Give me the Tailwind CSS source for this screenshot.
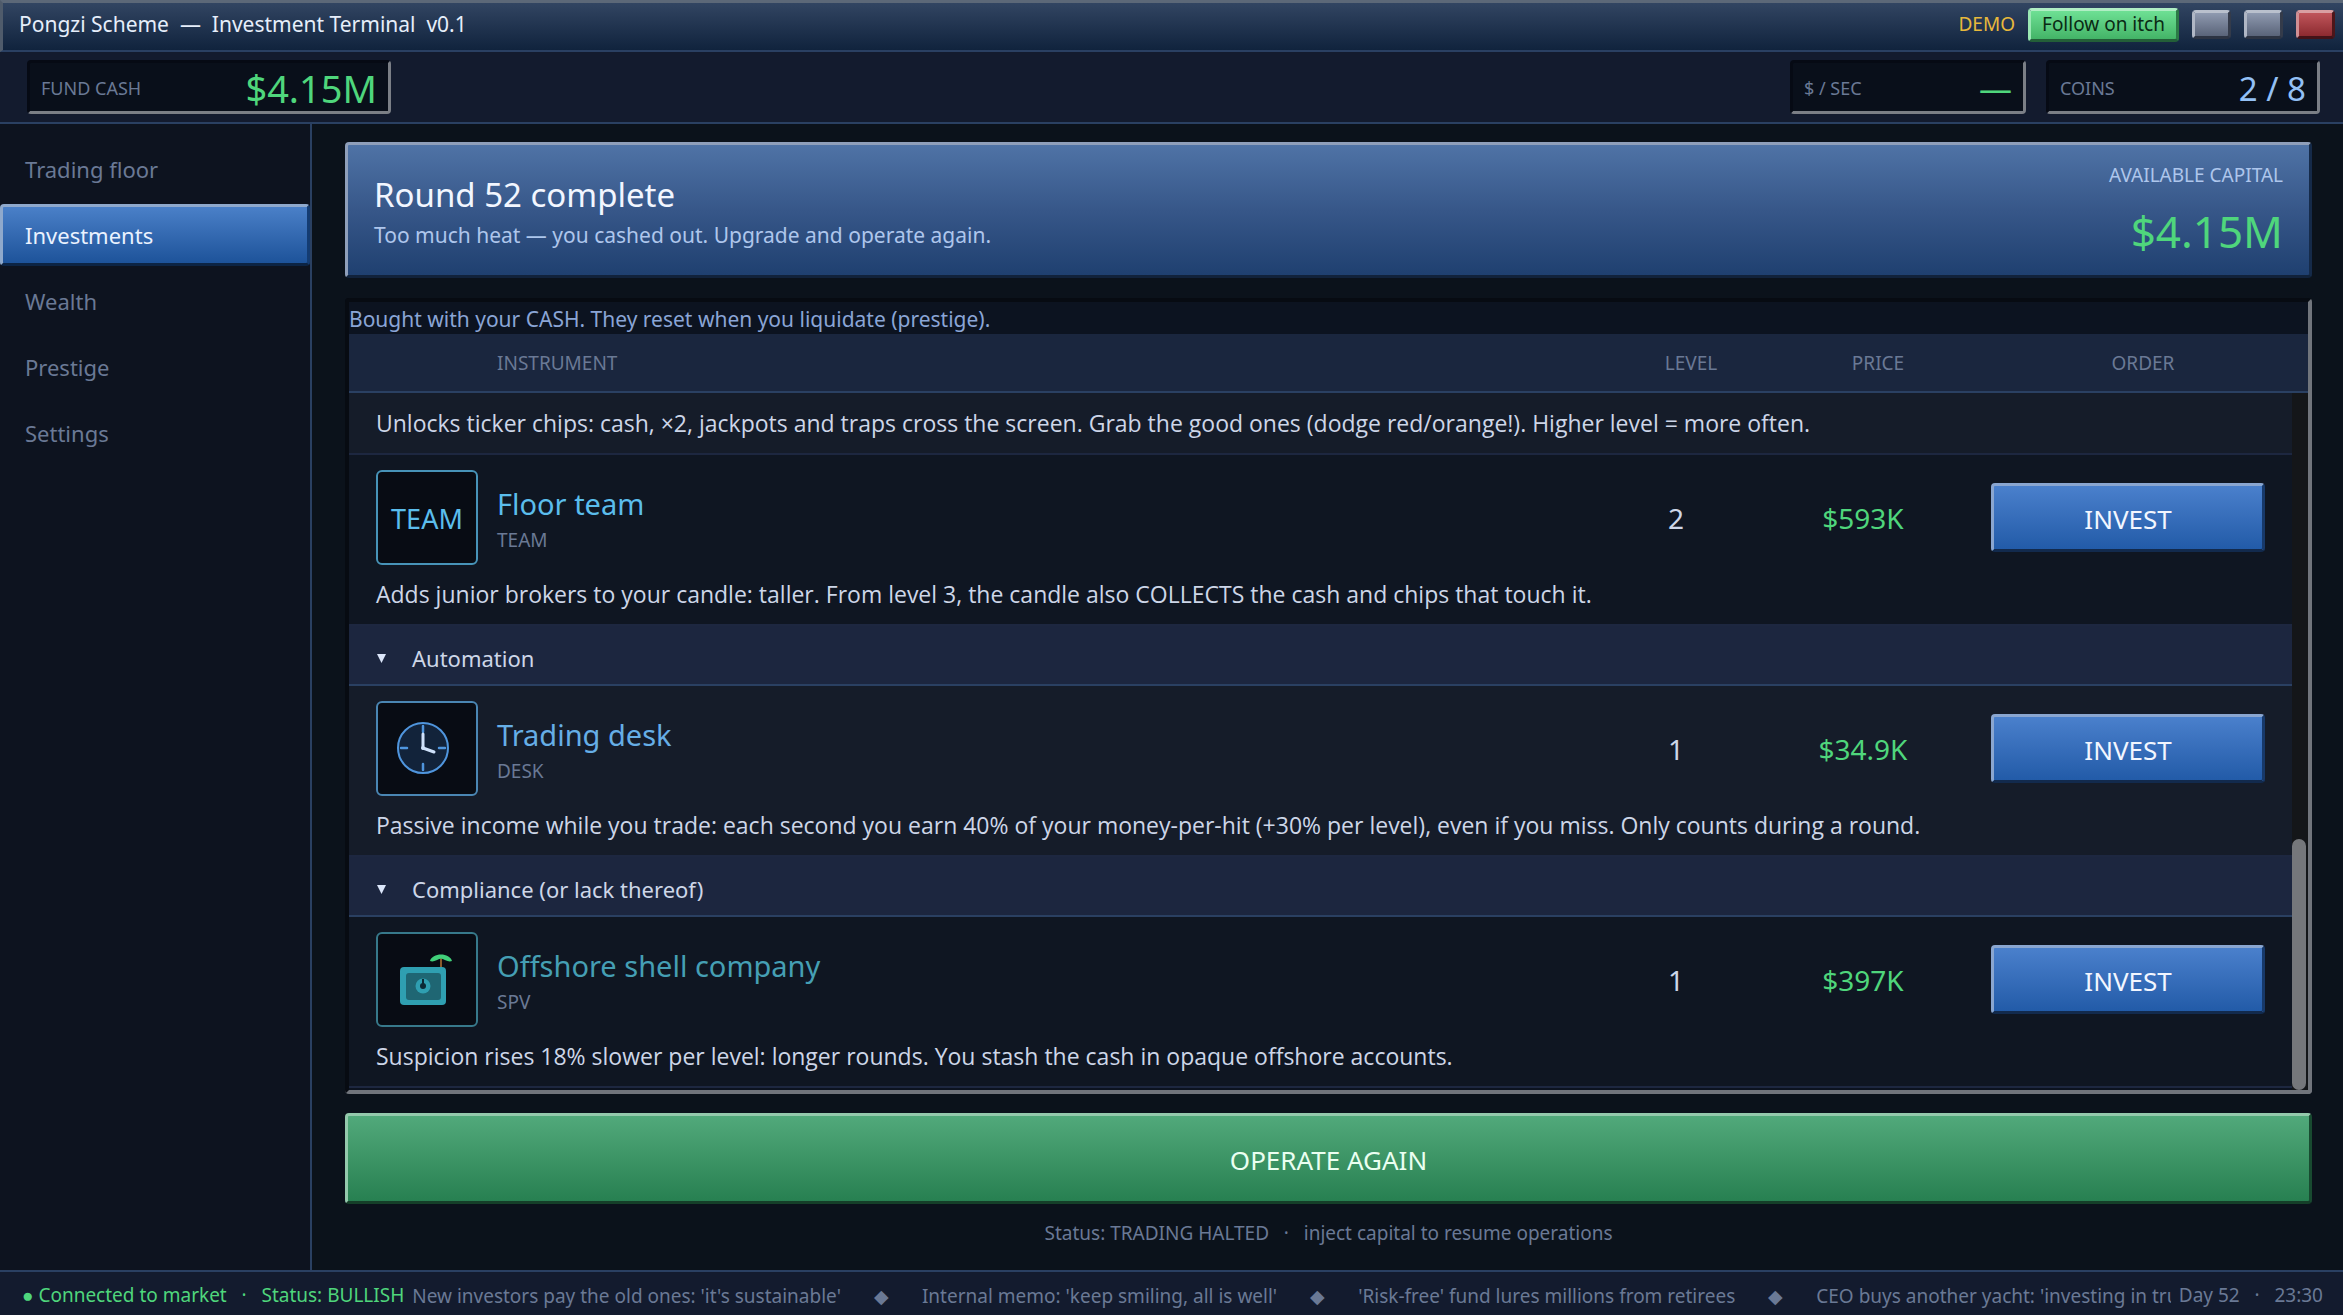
<!DOCTYPE html>
<html lang="en">

<head>
    <meta charset="UTF-8">
    <meta name="viewport" content="width=device-width, initial-scale=1.0">
    <title>Pongzi Scheme</title>
    <script src="https://cdn.jsdelivr.net/npm/@tailwindcss/browser@4"></script>
</head>

<body class="h-screen flex flex-col overflow-hidden bg-[#0b121b] font-['Segoe_UI','Noto_Sans',sans-serif] text-[21px] text-[#cdd6e8]">

    <!-- title bar -->
    <header class="h-[52px] shrink-0 flex items-center justify-between pl-4 pr-2 pb-1 bg-linear-to-b from-[#324562] to-[#10233d] border-t-3 border-l-3 border-t-[#5c6878] border-l-[#4f5b6b] border-b-2 border-b-[#2a4062]">
        <h1 class="whitespace-pre text-[#e6eefa]">Pongzi Scheme  —  Investment Terminal  v0.1</h1>
        <div class="flex items-center gap-[13px]">
            <span class="text-[#e8b93c] text-[19px]">DEMO</span>
            <a href="#" class="h-[34px] w-[151px] flex items-center justify-center rounded-sm text-[#0a2a14] text-[19px] bg-linear-to-b from-[#6ee094] to-[#43b467] border-3 border-t-[#b0eec4] border-l-[#9be8b4] border-r-[#2c7a46] border-b-[#235f38]">Follow on itch</a>
            <button aria-label="Minimize" class="w-[39px] h-[29px] rounded-sm bg-linear-to-b from-[#8f9ab0] to-[#5a6479] border-3 border-t-[#b9c0cd] border-l-[#b0b7c5] border-r-[#343b4a] border-b-[#2c3342]"></button>
            <button aria-label="Maximize" class="w-[39px] h-[29px] rounded-sm bg-linear-to-b from-[#8f9ab0] to-[#5a6479] border-3 border-t-[#b9c0cd] border-l-[#b0b7c5] border-r-[#343b4a] border-b-[#2c3342]"></button>
            <button aria-label="Close" class="w-[39px] h-[29px] rounded-sm bg-linear-to-b from-[#c0555b] to-[#8c2a30] border-3 border-t-[#d99fa2] border-l-[#d08f93] border-r-[#4d161a] border-b-[#431217]"></button>
        </div>
    </header>

    <!-- stats -->
    <section class="h-[72px] shrink-0 flex justify-between pl-[27px] py-2 pr-[23px] bg-[#131b2e] border-b-2 border-[#2a4062]">
        <div class="w-[364px] h-[54px] flex items-center justify-between px-[11px] pt-0.5 rounded-sm bg-[#090f1a] border-3 border-t-[#060a14] border-l-[#060a14] border-r-[#7b7f86] border-b-[#7b7f86]">
            <span class="text-[18px] text-[#6a7995]">FUND CASH</span>
            <span class="text-[38px] leading-none text-[#4fd67c]">$4.15M</span>
        </div>
        <div class="flex gap-5">
            <div class="w-[236px] h-[54px] flex items-center justify-between px-[11px] pt-0.5 rounded-sm bg-[#090f1a] border-3 border-t-[#060a14] border-l-[#060a14] border-r-[#7b7f86] border-b-[#7b7f86]">
                <span class="text-[18px] text-[#6a7995]">$ / SEC</span>
                <span class="text-[33px] leading-none text-[#4fd67c]">—</span>
            </div>
            <div class="w-[274px] h-[54px] flex items-center justify-between px-[11px] pt-0.5 rounded-sm bg-[#090f1a] border-3 border-t-[#060a14] border-l-[#060a14] border-r-[#7b7f86] border-b-[#7b7f86]">
                <span class="text-[18px] text-[#6a7995]">COINS</span>
                <span class="text-[33px] leading-none text-[#93c0f5]">2 / 8</span>
            </div>
        </div>
    </section>

    <div class="flex-1 min-h-0 flex">
        <!-- sidebar -->
        <nav class="w-[312px] shrink-0 flex flex-col gap-1 pt-3.5 bg-[#0d131f] border-r-2 border-[#2a4062] text-[22px] text-[#6a7995]">
            <a href="#" class="h-[62px] flex items-center pl-[22px] border-3 border-transparent">Trading floor</a>
            <a href="#" class="h-[62px] flex items-center pl-[22px] rounded-sm text-[#eaf2ff] bg-linear-to-b from-[#4a80c8] to-[#1d539a] border-3 border-t-[#8fa9cc] border-l-[#8fa9cc] border-r-[#143c72] border-b-[#0c2444]">Investments</a>
            <a href="#" class="h-[62px] flex items-center pl-[22px] border-3 border-transparent">Wealth</a>
            <a href="#" class="h-[62px] flex items-center pl-[22px] border-3 border-transparent">Prestige</a>
            <a href="#" class="h-[62px] flex items-center pl-[22px] border-3 border-transparent">Settings</a>
        </nav>

        <main class="flex-1 min-w-0 flex flex-col pl-[33px] pr-[31px] pt-[18px]">
            <!-- round banner -->
            <section class="h-[136px] shrink-0 flex justify-between px-[26px] pt-2.5 rounded-sm bg-linear-to-b from-[#4f73a6] via-[#375789] to-[#1f4070] border-3 border-t-[#8f9fba] border-l-[#8f9fba] border-r-[#152a49] border-b-[#11223b]">
                <div class="flex flex-col justify-center">
                    <h2 class="text-[33px] leading-10 text-[#f2f6ff]">Round 52 complete</h2>
                    <p class="leading-10 text-[#aec6ec]">Too much heat — you cashed out. Upgrade and operate again.</p>
                </div>
                <div class="flex flex-col justify-center items-end">
                    <p class="text-[19px] leading-8 text-[#aec6ec]">AVAILABLE CAPITAL</p>
                    <p class="text-[44px] leading-[80px] text-[#4fd67c]">$4.15M</p>
                </div>
            </section>

            <!-- instruments -->
            <section class="flex-1 min-h-0 mt-5 mb-[19px] flex flex-col rounded-sm bg-[#0c1320] border-4 border-t-[#070b12] border-l-[#070b12] border-r-[#71757c] border-b-[#71757c]">
                <p class="h-8 pt-1 shrink-0 flex items-center text-[#8aa5d6]">Bought with your CASH. They reset when you liquidate (prestige).</p>
                <table class="flex-1 min-h-0 flex flex-col">
                    <thead class="block shrink-0 bg-[#1a263e] border-b-2 border-[#2a4062] text-[19px] text-[#6a7995]">
                        <tr class="h-[57px] pt-0.5 grid grid-cols-[1fr_118px_216px_274px] gap-5 items-center pl-[148px] pr-7">
                            <th class="text-left font-normal">INSTRUMENT</th>
                            <th class="font-normal">LEVEL</th>
                            <th class="font-normal">PRICE</th>
                            <th class="font-normal">ORDER</th>
                        </tr>
                    </thead>
                    <tbody class="flex-1 min-h-0 block relative pr-4 overflow-hidden">
                        <tr class="h-[62px] flex items-center bg-[#151c29] border-b-2 border-[#1d2740]">
                            <td class="pl-[27px] text-[23px] font-['Segoe_UI','Open_Sans',sans-serif]">Unlocks ticker chips: cash, ×2, jackpots and traps cross the screen. Grab the good ones (dodge red/orange!). Higher level = more often.</td>
                        </tr>

                        <tr class="h-[110px] grid grid-cols-[101px_1fr_118px_216px_274px] gap-x-5 items-center pt-[15px] px-[27px] bg-[#0f1622]">
                            <td class="w-[102px] h-[95px] pt-1 flex items-center justify-center rounded-md bg-[#080c14] border-2 border-[#4793b8] text-[27px] text-[#5bbdec]">TEAM</td>
                            <td class="pt-1">
                                <h3 class="text-[29px] leading-10 text-[#5bbdec]">Floor team</h3>
                                <p class="text-[19px] leading-8 text-[#6a7995]">TEAM</p>
                            </td>
                            <td class="text-center text-[28px]">2</td>
                            <td class="text-center text-[28px] text-[#4fd67c]">$593K</td>
                            <td><button class="w-full h-[69px] pt-1 rounded-sm text-[26px] text-[#f2f6ff] bg-linear-to-b from-[#4a80cc] to-[#225ba8] border-3 border-t-[#8aa6d0] border-l-[#8aa6d0] border-r-[#17396a] border-b-[#122a4d]">INVEST</button></td>
                        </tr>
                        <tr class="h-[61px] flex items-center bg-[#0f1622] border-b-2 border-[#1d2740]">
                            <td class="pl-[27px] text-[23px] font-['Segoe_UI','Open_Sans',sans-serif]">Adds junior brokers to your candle: taller. From level 3, the candle also COLLECTS the cash and chips that touch it.</td>
                        </tr>

                        <tr class="h-[60px] pt-1.5 flex items-center bg-[#1c263f] border-b-2 border-[#2a4062]">
                            <td class="pl-7 flex items-center gap-[26px] text-[22px]">
                                <svg class="w-[9px] h-[9px]" viewBox="0 0 9 9" fill="#dbe6fa"><path d="M0 0h9L4.500 9z" /></svg>
                                <span>Automation</span>
                            </td>
                        </tr>
                        <tr class="h-[110px] grid grid-cols-[101px_1fr_118px_216px_274px] gap-x-5 items-center pt-[15px] px-[27px] bg-[#151c29]">
                            <td class="w-[102px] h-[95px] rounded-md bg-[#080c14] border-2 border-[#4a86b3]">
                                <svg class="w-full h-full" viewBox="2 2 98 91" fill="none" stroke-linecap="round">
                                    <circle cx="47" cy="47" r="25" fill="#12233a" stroke="#4f95dd" stroke-width="2" />
                                    <path d="M47 25v6M47 63v6M25 47h6M63 47h6" stroke="#4f95dd" stroke-width="2.500" />
                                    <path d="M47 33v14l11 4" stroke="#cfe2fb" stroke-width="3" stroke-linejoin="round" />
                                    <circle cx="47" cy="47" r="2" fill="#cfe2fb" />
                                </svg>
                            </td>
                            <td class="pt-1">
                                <h3 class="text-[29px] leading-10 text-[#66aee6]">Trading desk</h3>
                                <p class="text-[19px] leading-8 text-[#6a7995]">DESK</p>
                            </td>
                            <td class="text-center text-[28px]">1</td>
                            <td class="text-center text-[28px] text-[#4fd67c]">$34.9K</td>
                            <td><button class="w-full h-[69px] pt-1 rounded-sm text-[26px] text-[#f2f6ff] bg-linear-to-b from-[#4a80cc] to-[#225ba8] border-3 border-t-[#8aa6d0] border-l-[#8aa6d0] border-r-[#17396a] border-b-[#122a4d]">INVEST</button></td>
                        </tr>
                        <tr class="h-[61px] flex items-center bg-[#151c29] border-b-2 border-[#1d2740]">
                            <td class="pl-[27px] text-[23px] font-['Segoe_UI','Open_Sans',sans-serif]">Passive income while you trade: each second you earn 40% of your money-per-hit (+30% per level), even if you miss. Only counts during a round.</td>
                        </tr>

                        <tr class="h-[60px] pt-1.5 flex items-center bg-[#1c263f] border-b-2 border-[#2a4062]">
                            <td class="pl-7 flex items-center gap-[26px] text-[22px]">
                                <svg class="w-[9px] h-[9px]" viewBox="0 0 9 9" fill="#dbe6fa"><path d="M0 0h9L4.500 9z" /></svg>
                                <span>Compliance (or lack thereof)</span>
                            </td>
                        </tr>
                        <tr class="h-[110px] grid grid-cols-[101px_1fr_118px_216px_274px] gap-x-5 items-center pt-[15px] px-[27px] bg-[#0f1622]">
                            <td class="w-[102px] h-[95px] rounded-md bg-[#080c14] border-2 border-[#37798b]">
                                <svg class="w-full h-full" viewBox="2 2 98 91" fill="none">
                                    <path d="M65 26v10" stroke="#8a5a2c" stroke-width="2" />
                                    <path d="M54 29c1-4 6-6.500 11-6.500s10 2.500 11 6.500c-4 1.500-7-1.500-11-2.500c-4 1-7 4-11 2.500z" fill="#41d07a" />
                                    <rect x="24" y="35" width="46" height="38" rx="4" fill="#2f9fb1" />
                                    <rect x="30" y="41" width="35" height="27" rx="3" fill="#1f6673" />
                                    <circle cx="47" cy="54" r="7.500" fill="#2f9fb1" />
                                    <circle cx="47" cy="54" r="3" fill="#0c2a35" />
                                    <path d="M47 47v6" stroke="#0c2a35" stroke-width="2" />
                                </svg>
                            </td>
                            <td class="pt-1">
                                <h3 class="text-[29px] leading-10 text-[#459fb4]">Offshore shell company</h3>
                                <p class="text-[19px] leading-8 text-[#6a7995]">SPV</p>
                            </td>
                            <td class="text-center text-[28px]">1</td>
                            <td class="text-center text-[28px] text-[#4fd67c]">$397K</td>
                            <td><button class="w-full h-[69px] pt-1 rounded-sm text-[26px] text-[#f2f6ff] bg-linear-to-b from-[#4a80cc] to-[#225ba8] border-3 border-t-[#8aa6d0] border-l-[#8aa6d0] border-r-[#17396a] border-b-[#122a4d]">INVEST</button></td>
                        </tr>
                        <tr class="h-[61px] flex items-center bg-[#0f1622] border-b-2 border-[#1d2740]">
                            <td class="pl-[27px] text-[23px] font-['Segoe_UI','Open_Sans',sans-serif]">Suspicion rises 18% slower per level: longer rounds. You stash the cash in opaque offshore accounts.</td>
                        </tr>

                        <!-- scrollbar -->
                        <tr aria-hidden="true" class="absolute top-0 right-0 bottom-0 w-4 flex flex-col justify-end bg-[#141619]">
                            <td class="block w-3.5 h-[36%] p-0 rounded-full bg-[#75777b]"></td>
                        </tr>
                    </tbody>
                </table>
            </section>

            <button class="h-[91px] pt-1 shrink-0 rounded-sm text-[26px] text-[#eafff1] bg-linear-to-b from-[#51a97b] to-[#278051] border-3 border-t-[#94c9ac] border-l-[#94c9ac] border-r-[#184a30] border-b-[#153f29]">OPERATE AGAIN</button>
            <p class="h-[66px] shrink-0 text-center leading-[58px] whitespace-pre text-[19px] text-[#6a7995]">Status: TRADING HALTED   ·   inject capital to resume operations</p>
        </main>
    </div>

    <!-- status bar with news ticker -->
    <footer class="h-[45px] pt-1 shrink-0 flex items-center gap-2 bg-[#131b2e] border-t-2 border-[#2a4062] pl-[22px] pr-5 text-[19px] whitespace-pre text-[#6a7995]">
        <span class="text-[#4fd67c]">● Connected to market   ·   Status: BULLISH</span>
        <div class="flex-1 min-w-0 flex gap-[33px] pt-0.5 overflow-hidden">
            <span>New investors pay the old ones: 'it's sustainable'</span>
            <span>◆</span>
            <span>Internal memo: 'keep smiling, all is well'</span>
            <span>◆</span>
            <span>'Risk-free' fund lures millions from retirees</span>
            <span>◆</span>
            <span>CEO buys another yacht: 'investing in trust'</span>
        </div>
        <span>Day 52   ·   23:30</span>
    </footer>
</body>

</html>
